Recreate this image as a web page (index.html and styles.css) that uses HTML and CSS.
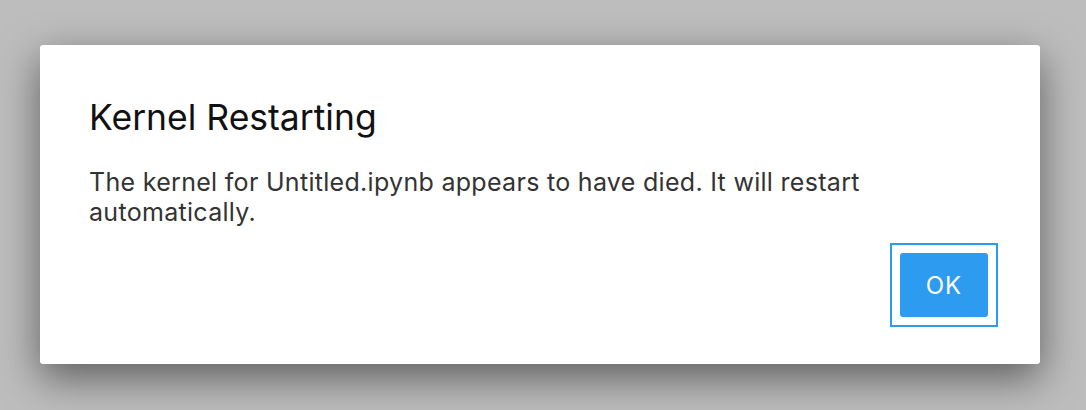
FILE: index.html
```html
<!DOCTYPE html>
<html>
<head>
    <title>Kernel Restarting</title>
    <link rel="stylesheet" href="styles.css">
</head>
<body>
    <div class="backdrop">
        <div class="dialog">
            <h1 class="dialog-title">Kernel Restarting</h1>
            <p class="dialog-body">The kernel for Untitled.ipynb appears to have died. It will restart automatically.</p>
            <div class="dialog-footer">
                <div class="focus-ring">
                    <button class="btn-ok">OK</button>
                </div>
            </div>
        </div>
    </div>
</body>
</html>
```

FILE: styles.css
```css
html, body {
    margin: 0;
    height: 100%;
}
body {
    font-family: Inter, "Noto Sans", sans-serif;
    background-color: #bdbdbd;
    overflow: hidden;
}
.backdrop {
    padding: 45px 46px 0 40px;
}
.dialog {
    box-sizing: border-box;
    width: 1000px;
    height: 319px;
    background-color: #fff;
    border-radius: 3px;
    box-shadow: 0 14px 40px rgba(0,0,0,0.5);
    padding: 51px 42px 37px 49px;
    display: flex;
    flex-direction: column;
}
.dialog-title {
    margin: 0;
    font-size: 35.5px;
    font-weight: 400;
    line-height: 44px;
    color: #111;
}
.dialog-body {
    margin: 27px 0 0 0;
    font-size: 25px;
    letter-spacing: 0.3px;
    line-height: 30px;
    color: #333;
    max-width: 820px;
}
.dialog-footer {
    margin-top: auto;
    display: flex;
    justify-content: flex-end;
}
.focus-ring {
    border: 2px solid #2d9bf0;
    padding: 8px;
    display: flex;
}
.btn-ok {
    width: 88px;
    height: 64px;
    background-color: #2d9bf0;
    color: #fff;
    border: none;
    border-radius: 3px;
    font-family: inherit;
    font-size: 24px;
    letter-spacing: 1px;
    outline: none;
    cursor: pointer;
}
```
